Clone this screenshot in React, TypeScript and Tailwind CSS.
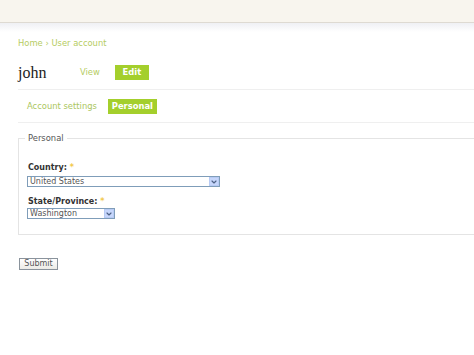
import { ChevronDown } from "lucide-react";

const SelectBox = ({ value, width }: { value: string; width: string }) => {
  return (
    <div className={`relative h-[11px] ${width} border border-[#7f9db9] bg-white`}>
      <select
        defaultValue={value}
        className="block h-full w-full appearance-none bg-white pl-[2px] text-[8px] leading-[9px] text-[#555] outline-none"
      >
        <option>{value}</option>
      </select>
      {/* xp style dropdown arrow */}
      <div className="absolute right-0 top-0 flex h-[9px] w-[10px] items-center justify-center border border-[#b8cbf4] bg-[#c6d6fb]">
        <ChevronDown size={8} strokeWidth={3.5} className="text-[#4d6185]" />
      </div>
    </div>
  );
};

const App = () => {
  return (
    <div className="h-[355px] w-[474px] overflow-hidden bg-white font-['DejaVu_Sans',Verdana,sans-serif]">
      {/* Header band */}
      <div className="h-[23px] border-b border-[#dedad2] bg-[#f8f5ee]" />
      <div className="h-[9px] bg-gradient-to-b from-[#eff0f4] to-white" />

      <div className="pl-[18px]">
        {/* Breadcrumb */}
        <div className="mt-[6px] text-[8.4px] leading-[10px] text-[#b5cc62]">
          Home › User account
        </div>

        {/* Title + primary tabs */}
        <div className="mt-[17px] flex h-[15px] items-center">
          <h1 className="w-[53px] font-['Liberation_Serif',serif] text-[16px] leading-[15px] text-[#222]">
            john
          </h1>
          <span className="px-[9px] text-[8.4px] text-[#b5cc62]">View</span>
          <span className="ml-[6px] flex h-[15px] w-[34px] items-center justify-center bg-[#a4cf2c] text-[8.4px] font-bold text-white">
            Edit
          </span>
        </div>
        <div className="mt-[9px] border-t border-[#efefef]" />

        {/* Secondary tabs */}
        <div className="mt-[9px] flex h-[15px] items-center">
          <span className="pl-[9px] pr-[11px] text-[8.4px] text-[#abc65e]">Account settings</span>
          <span className="flex h-[15px] w-[49px] items-center justify-center bg-[#a4cf2c] text-[8.4px] font-bold text-white">
            Personal
          </span>
        </div>
        <div className="mt-[8px] border-t border-[#efefef]" />

        {/* Form */}
        <fieldset className="mt-[10px] w-[480px] border border-[#e4e4e4] pb-[15px] pl-[9px]">
          <legend className="-ml-[3px] px-[3px] text-[8.4px] leading-[10px] text-[#555]">Personal</legend>

          <label className="mt-[20px] block text-[8px] font-bold leading-[10px] text-[#333]">
            Country: <span className="text-[#f2c94c]">*</span>
          </label>
          <div className="-ml-[1px] mt-[3px]">
            <SelectBox value="United States" width="w-[193px]" />
          </div>

          <label className="mt-[10px] block text-[8px] font-bold leading-[10px] text-[#333]">
            State/Province: <span className="text-[#f2c94c]">*</span>
          </label>
          <div className="-ml-[1px] mt-[1px]">
            <SelectBox value="Washington" width="w-[88px]" />
          </div>
        </fieldset>

        <button className="ml-[1px] mt-[23px] flex h-[12px] w-[39px] items-center justify-center border border-[#8a939c] bg-gradient-to-b from-white to-[#ecebe6] text-[8px] text-[#555]">
          Submit
        </button>
      </div>
    </div>
  );
};

export default App;
